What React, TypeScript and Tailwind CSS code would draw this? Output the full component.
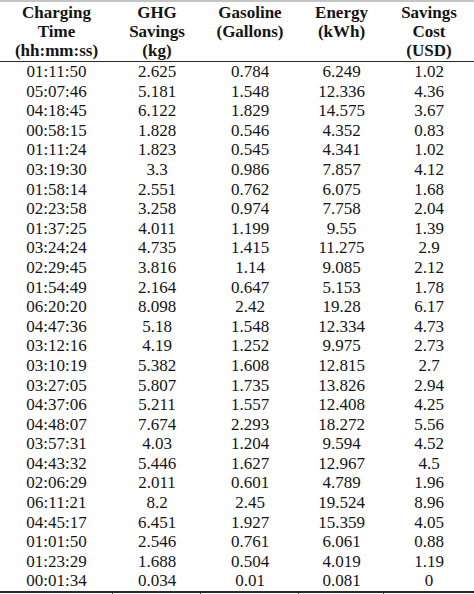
import React from "react";

const rows: string[][] = [
  ["01:11:50", "2.625", "0.784", "6.249", "1.02"],
  ["05:07:46", "5.181", "1.548", "12.336", "4.36"],
  ["04:18:45", "6.122", "1.829", "14.575", "3.67"],
  ["00:58:15", "1.828", "0.546", "4.352", "0.83"],
  ["01:11:24", "1.823", "0.545", "4.341", "1.02"],
  ["03:19:30", "3.3", "0.986", "7.857", "4.12"],
  ["01:58:14", "2.551", "0.762", "6.075", "1.68"],
  ["02:23:58", "3.258", "0.974", "7.758", "2.04"],
  ["01:37:25", "4.011", "1.199", "9.55", "1.39"],
  ["03:24:24", "4.735", "1.415", "11.275", "2.9"],
  ["02:29:45", "3.816", "1.14", "9.085", "2.12"],
  ["01:54:49", "2.164", "0.647", "5.153", "1.78"],
  ["06:20:20", "8.098", "2.42", "19.28", "6.17"],
  ["04:47:36", "5.18", "1.548", "12.334", "4.73"],
  ["03:12:16", "4.19", "1.252", "9.975", "2.73"],
  ["03:10:19", "5.382", "1.608", "12.815", "2.7"],
  ["03:27:05", "5.807", "1.735", "13.826", "2.94"],
  ["04:37:06", "5.211", "1.557", "12.408", "4.25"],
  ["04:48:07", "7.674", "2.293", "18.272", "5.56"],
  ["03:57:31", "4.03", "1.204", "9.594", "4.52"],
  ["04:43:32", "5.446", "1.627", "12.967", "4.5"],
  ["02:06:29", "2.011", "0.601", "4.789", "1.96"],
  ["06:11:21", "8.2", "2.45", "19.524", "8.96"],
  ["04:45:17", "6.451", "1.927", "15.359", "4.05"],
  ["01:01:50", "2.546", "0.761", "6.061", "0.88"],
  ["01:23:29", "1.688", "0.504", "4.019", "1.19"],
  ["00:01:34", "0.034", "0.01", "0.081", "0"],
];

const headers: string[][] = [
  ["Charging", "Time", "(hh:mm:ss)"],
  ["GHG", "Savings", "(kg)"],
  ["Gasoline", "(Gallons)"],
  ["Energy", "(kWh)"],
  ["Savings", "Cost", "(USD)"],
];

const cols = "grid grid-cols-[113px_88px_98px_85px_90px]";

export default function App() {
  return (
    <div
      className="w-[474px] h-[594px] overflow-hidden bg-white text-[#141414]"
      style={{ fontFamily: '"Liberation Serif", "Times New Roman", serif' }}
    >
      <div className="h-[2px] bg-[#c4c4c4]" />
      <div className={`${cols} pt-[1px] h-[60px] border-b-[1.5px] border-[#2a2a2a]`}>
        {headers.map((h, i) => (
          <div key={i} className="flex flex-col items-center text-[17px] font-bold leading-[19px]">
            {h.map((l, j) => (
              <span key={j}>{l}</span>
            ))}
          </div>
        ))}
      </div>
      <div className="flex flex-col">
        {rows.map((r, i) => (
          <div key={i} className={`${cols} h-[19.6px]`}>
            {r.map((c, j) => (
              <div key={j} className="text-center text-[17px] leading-[19.6px]">
                {c}
              </div>
            ))}
          </div>
        ))}
      </div>
      <div className="h-[2px] bg-[#2a2a2a]" />
      <div className={`${cols} h-[4px]`}>
        <div className="border-r border-[#444]" />
        <div className="border-r border-[#444]" />
        <div className="border-r border-[#444]" />
        <div className="border-r border-[#444]" />
        <div />
      </div>
    </div>
  );
}
